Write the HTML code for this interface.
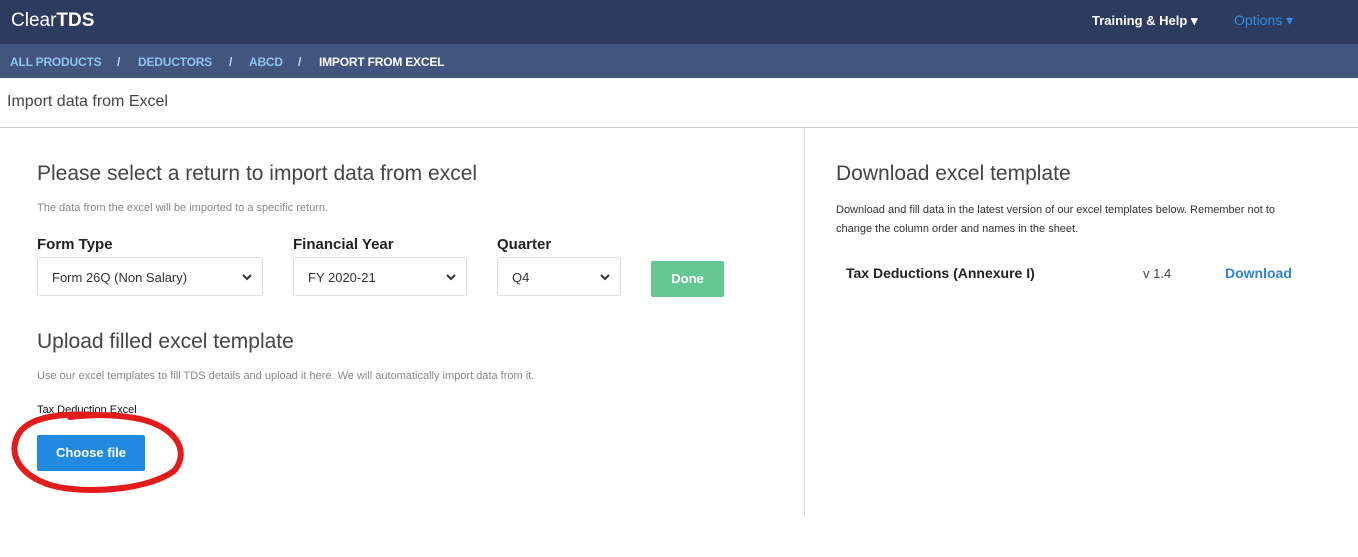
<!DOCTYPE html>
<html><head><style>
*{box-sizing:border-box;margin:0;padding:0}
body{width:1358px;height:557px;background:#fff;font-family:"Liberation Sans",sans-serif;position:relative;overflow:hidden;color:#333}
.a{position:absolute;white-space:nowrap}
.top{left:0;top:0;width:1358px;height:44px;background:#2d3c5e}
.crumb{left:0;top:44px;width:1358px;height:34px;background:#42557f}
.bc{font-size:12px;font-weight:bold;color:#8fc3f0;top:55px;letter-spacing:-0.2px}
.sel{border:1px solid #ddd;border-radius:3px;height:39px;top:257px;font-size:13px;color:#333;padding:12px 14px}
.sel svg{position:absolute;right:10px;top:15px}
.lbl{font-size:15px;font-weight:bold;color:#222;top:236px}
.h{font-size:21px;color:#444}
.sm{font-size:11px;color:#888}
</style></head><body>
<div class="a top"></div>
<div class="a" style="left:11px;top:10px;font-size:19px;color:#fff">Clear<b>TDS</b></div>
<div class="a" style="left:1092px;top:13px;font-size:13px;font-weight:bold;color:#fff">Training &amp; Help ▾</div>
<div class="a" style="left:1234px;top:12px;font-size:14px;color:#2e8de0">Options ▾</div>
<div class="a crumb"></div>
<div class="a bc" style="left:10px">ALL PRODUCTS</div>
<div class="a bc" style="left:117px;color:#c9d6ea">/</div>
<div class="a bc" style="left:138px">DEDUCTORS</div>
<div class="a bc" style="left:229px;color:#c9d6ea">/</div>
<div class="a bc" style="left:249px">ABCD</div>
<div class="a bc" style="left:298px;color:#c9d6ea">/</div>
<div class="a bc" style="left:319px;color:#fff">IMPORT FROM EXCEL</div>
<div class="a" style="left:7px;top:93px;font-size:16px;color:#444">Import data from Excel</div>
<div class="a" style="left:0;top:127px;width:1358px;height:1px;background:#ccc"></div>
<div class="a" style="left:804px;top:128px;width:1px;height:388px;background:#ddd"></div>
<div class="a h" style="left:37px;top:162px">Please select a return to import data from excel</div>
<div class="a sm" style="left:37px;top:202px">The data from the excel will be imported to a specific return.</div>
<div class="a lbl" style="left:37px">Form Type</div>
<div class="a lbl" style="left:293px">Financial Year</div>
<div class="a lbl" style="left:497px">Quarter</div>
<div class="a sel" style="left:37px;width:226px">Form 26Q (Non Salary)<svg width="10" height="8"><path d="M1 2l4 4 4-4" stroke="#333" stroke-width="2" fill="none"/></svg></div>
<div class="a sel" style="left:293px;width:174px">FY 2020-21<svg width="10" height="8"><path d="M1 2l4 4 4-4" stroke="#333" stroke-width="2" fill="none"/></svg></div>
<div class="a sel" style="left:497px;width:124px">Q4<svg width="10" height="8"><path d="M1 2l4 4 4-4" stroke="#333" stroke-width="2" fill="none"/></svg></div>
<div class="a" style="left:651px;top:261px;width:73px;height:36px;background:#66c795;border-radius:2px;color:#fff;font-size:13px;font-weight:bold;text-align:center;line-height:36px">Done</div>
<div class="a h" style="left:37px;top:330px">Upload filled excel template</div>
<div class="a sm" style="left:37px;top:370px">Use our excel templates to fill TDS details and upload it here. We will automatically import data from it.</div>
<div class="a" style="left:37px;top:404px;font-size:11px;color:#111">Tax Deduction Excel</div>
<div class="a" style="left:37px;top:435px;width:108px;height:36px;background:#2189df;border-radius:2px;color:#fff;font-size:13px;font-weight:bold;text-align:center;line-height:36px">Choose file</div>
<svg class="a" style="left:0;top:405px" width="200" height="90"><path d="M95 10 C60 8 28 12 18 30 C8 50 20 70 50 80 C85 90 150 85 175 65 C190 45 175 22 140 14 C120 10 95 9 70 12" stroke="#e41b1b" stroke-width="6" fill="none" stroke-linecap="round"/></svg>
<div class="a h" style="left:836px;top:162px">Download excel template</div>
<div class="a" style="left:836px;top:201px;font-size:11px;color:#333;line-height:19px;white-space:normal;width:470px">Download and fill data in the latest version of our excel templates below. Remember not to change the column order and names in the sheet.</div>
<div class="a" style="left:846px;top:265px;font-size:14px;font-weight:bold;color:#222">Tax Deductions (Annexure I)</div>
<div class="a" style="left:1143px;top:266px;font-size:13px;color:#444">v 1.4</div>
<div class="a" style="left:1225px;top:265px;font-size:14px;font-weight:bold;color:#2e83d3">Download</div>
</body></html>
